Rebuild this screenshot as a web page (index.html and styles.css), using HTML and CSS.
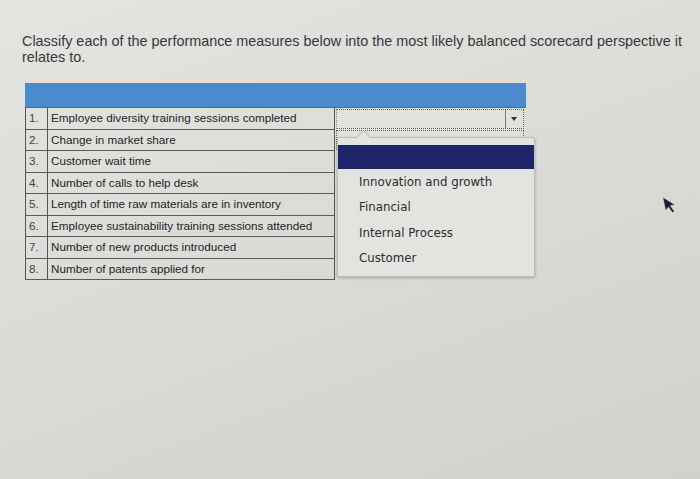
FILE: index.html
```html
<!DOCTYPE html>
<html>
<head>
<meta charset="utf-8">
<link rel="stylesheet" href="styles.css">
</head>
<body>
<div class="page">
  <p class="prompt">Classify each of the performance measures below into the most likely balanced scorecard perspective it relates to.</p>
  <div class="table">
    <div class="head"></div>
    <div class="row"><div class="num">1.</div><div class="measure">Employee diversity training sessions completed</div><div class="pick"><div class="select first"><span class="btn"><span class="arrow"></span></span></div></div></div>
    <div class="row"><div class="num">2.</div><div class="measure">Change in market share</div><div class="pick"><div class="select second"></div></div></div>
    <div class="row"><div class="num">3.</div><div class="measure">Customer wait time</div><div class="pick"></div></div>
    <div class="row"><div class="num">4.</div><div class="measure">Number of calls to help desk</div><div class="pick"></div></div>
    <div class="row"><div class="num">5.</div><div class="measure">Length of time raw materials are in inventory</div><div class="pick"></div></div>
    <div class="row"><div class="num">6.</div><div class="measure">Employee sustainability training sessions attended</div><div class="pick"></div></div>
    <div class="row"><div class="num">7.</div><div class="measure">Number of new products introduced</div><div class="pick"></div></div>
    <div class="row"><div class="num">8.</div><div class="measure">Number of patents applied for</div><div class="pick"></div></div>
    <div class="popup">
      <div class="notch"></div>
      <div class="hl"></div>
      <ul class="opts">
        <li>Innovation and growth</li>
        <li>Financial</li>
        <li>Internal Process</li>
        <li>Customer</li>
      </ul>
    </div>
  </div>
  <svg class="cursor" width="14" height="20" viewBox="0 0 14 20"><path d="M1.5 1 L1.5 15 L5 12 L7.8 18.2 L10 17.2 L7.3 11.1 L11.8 11.1 Z" fill="#1b1e30" stroke="#d8d8d8" stroke-width="0.6" transform="rotate(-12 6 10)"/></svg>
</div>
</body>
</html>
```
FILE: styles.css
```css
html, body { margin: 0; padding: 0; }
body {
  width: 700px; height: 479px; overflow: hidden;
  background: linear-gradient(160deg, #e4e4e1 0%, #dbdbd8 45%, #d1d1ce 100%);
  font-family: "Liberation Sans", Arial, sans-serif;
}
.page { position: relative; width: 700px; height: 479px; padding: 33px 0 0 0; box-sizing: border-box; }
.prompt {
  margin: 0 0 0 22px; width: 672px;
  font-size: 14.4px; line-height: 16px; color: #38383b;
}
.table { position: relative; margin: 18px 0 0 25px; width: 501px; }
.head { height: 24px; background: #4a8bd0; border-bottom: 1px solid #3b6fa8; }
.row { display: grid; grid-template-columns: 22px 288px 191px; height: 21.5px; }
.num, .measure {
  border-left: 1px solid #555; border-bottom: 1px solid #5a5a5a;
  font-size: 11.7px; color: #1f1f1f; line-height: 20px; padding-left: 3px; white-space: nowrap;
}
.num { color: #444; }
.measure { border-right: 1px solid #555; padding-left: 3px; }
.pick { position: relative; }
.select { position: absolute; left: 1px; right: 2px; top: 1px; height: 18px; border: 1px dotted #666; background: #e1e1de; }
.select.first { border-left: 1px dotted #888; }
.btn { position: absolute; right: 0; top: 0; bottom: 0; width: 17px; border-left: 1px solid #777; }
.arrow { position: absolute; left: 5px; top: 7px; width: 0; height: 0; border-left: 3.5px solid transparent; border-right: 3.5px solid transparent; border-top: 4px solid #333; }
.select.second { top: 0; }
.row:last-of-type .pick { border-bottom: 2px solid #444; }
.popup {
  position: absolute; left: 312px; top: 54px; width: 196px; height: 138px;
  background: #e3e3e0; border: 1px solid #bdbdbb; border-radius: 2px;
  box-shadow: 0 1px 3px rgba(0,0,0,0.25);
}
.notch { position: absolute; left: 20px; top: -6px; width: 10px; height: 10px; background: #e3e3e0; border-left: 1px solid #bdbdbb; border-top: 1px solid #bdbdbb; transform: rotate(45deg); }
.hl { margin: 7px 0 0 0; height: 24px; background: #1e2669; position: relative; }
.opts { list-style: none; margin: 1px 0 0 0; padding: 0 0 0 21px; font-family: "DejaVu Sans", Verdana, sans-serif; font-size: 11.8px; color: #2c2c2e; }
.opts li { height: 25.3px; line-height: 25px; }
.cursor { position: absolute; left: 663px; top: 195px; }
```
